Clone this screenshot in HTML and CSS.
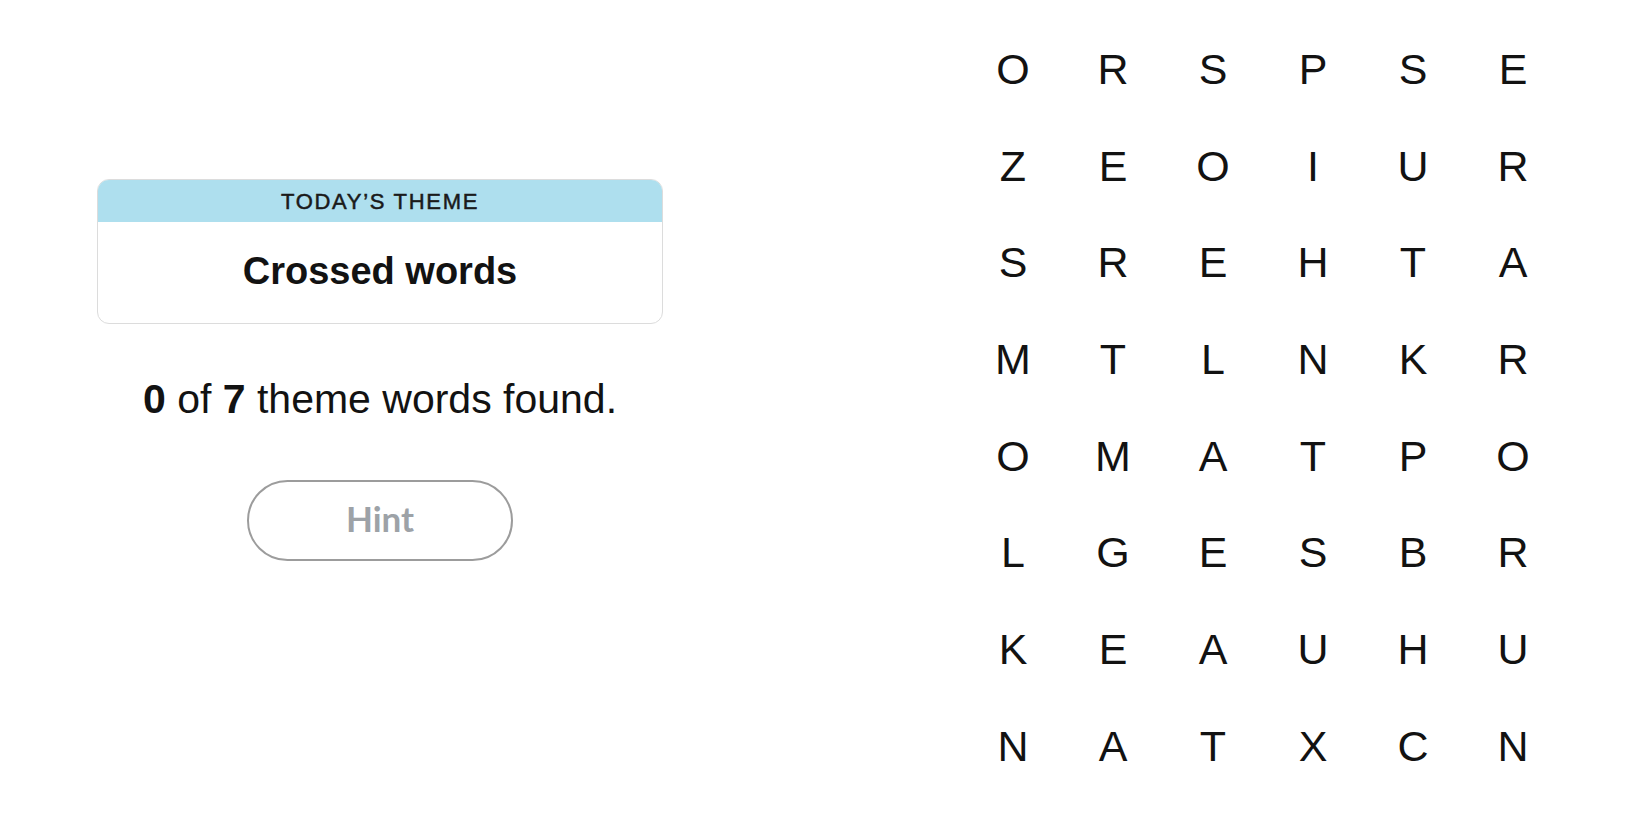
FILE: index.html
```html
<!DOCTYPE html>
<html lang="en">
<head>
<meta charset="utf-8">
<title>Strands</title>
<link rel="stylesheet" href="styles.css">
</head>
<body>
<main class="page">
  <section class="info">
    <div class="theme-card">
      <div class="theme-head">TODAY’S THEME</div>
      <div class="theme-body">Crossed words</div>
    </div>
    <p class="found"><b>0</b> of <b>7</b> theme words found.</p>
    <button class="hint" type="button">Hint</button>
  </section>
  <section class="board">
    <span>O</span><span>R</span><span>S</span><span>P</span><span>S</span><span>E</span>
    <span>Z</span><span>E</span><span>O</span><span>I</span><span>U</span><span>R</span>
    <span>S</span><span>R</span><span>E</span><span>H</span><span>T</span><span>A</span>
    <span>M</span><span>T</span><span>L</span><span>N</span><span>K</span><span>R</span>
    <span>O</span><span>M</span><span>A</span><span>T</span><span>P</span><span>O</span>
    <span>L</span><span>G</span><span>E</span><span>S</span><span>B</span><span>R</span>
    <span>K</span><span>E</span><span>A</span><span>U</span><span>H</span><span>U</span>
    <span>N</span><span>A</span><span>T</span><span>X</span><span>C</span><span>N</span>
  </section>
</main>
</body>
</html>
```

FILE: styles.css
```css
* { box-sizing: border-box; }
html, body {
  margin: 0;
  padding: 0;
  background: #ffffff;
}
body {
  font-family: "Liberation Sans", Arial, sans-serif;
  color: #000;
  width: 1650px;
  height: 825px;
  overflow: hidden;
}
.page {
  display: flex;
  align-items: flex-start;
}
.info {
  width: 566px;
  margin-left: 97px;
  padding-top: 179px;
  display: flex;
  flex-direction: column;
  align-items: center;
}
.theme-card {
  width: 566px;
  height: 145px;
  border: 1px solid #dcdcdc;
  border-radius: 12px;
  overflow: hidden;
  display: flex;
  flex-direction: column;
}
.theme-head {
  height: 42px;
  background: #aedfee;
  display: flex;
  align-items: center;
  justify-content: center;
  padding-top: 2px;
  font-size: 22px;
  letter-spacing: 1.7px;
  color: #1a1a1a;
  -webkit-text-stroke: 0.5px #1a1a1a;
}
.theme-body {
  flex: 1;
  display: flex;
  align-items: center;
  justify-content: center;
  padding-bottom: 2px;
  font-size: 38px;
  font-weight: 700;
  color: #121212;
}
.found {
  margin: 51px 0 0;
  font-size: 41px;
  line-height: 49px;
  color: #121212;
}
.found b { font-weight: 700; }
.hint {
  margin-top: 56px;
  width: 266px;
  height: 81px;
  border: 2px solid #9c9c9c;
  border-radius: 41px;
  background: #fff;
  font-family: Lato, "Liberation Sans", sans-serif;
  font-weight: 700;
  font-size: 35px;
  color: #9da2a7;
  padding: 0 0 5px;
  display: flex;
  align-items: center;
  justify-content: center;
}
.board {
  margin-left: 300px;
  margin-top: 21px;
  display: grid;
  grid-template-columns: repeat(6, 100px);
  grid-template-rows: repeat(8, 96.7px);
}
.board span {
  display: flex;
  align-items: center;
  justify-content: center;
  font-size: 43px;
  color: #121212;
}
```
